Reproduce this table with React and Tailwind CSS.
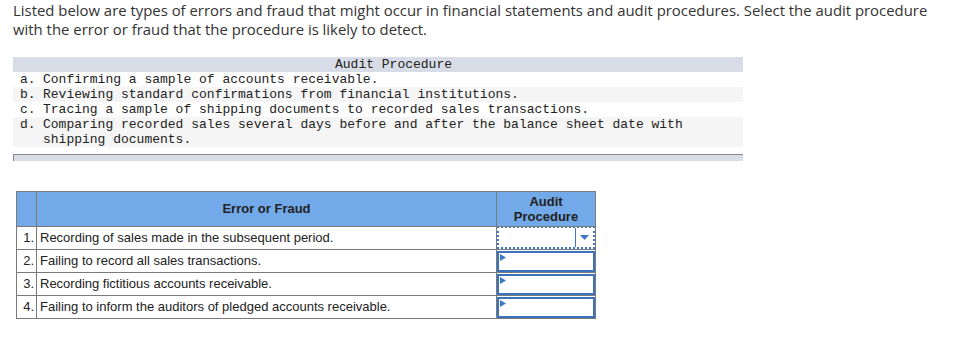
import React from 'react';

const procedures = [
  { key: 'a', text: 'Confirming a sample of accounts receivable.' },
  { key: 'b', text: 'Reviewing standard confirmations from financial institutions.' },
  { key: 'c', text: 'Tracing a sample of shipping documents to recorded sales transactions.' },
  {
    key: 'd',
    text: 'Comparing recorded sales several days before and after the balance sheet date with',
    more: 'shipping documents.',
  },
];

const errors = [
  'Recording of sales made in the subsequent period.',
  'Failing to record all sales transactions.',
  'Recording fictitious accounts receivable.',
  'Failing to inform the auditors of pledged accounts receivable.',
];

const Flag = () => (
  <svg className="absolute left-[1px] top-[1px]" width="6" height="7" viewBox="0 0 6 7">
    <path d="M0 0 L6 3.5 L0 7 Z" fill="#3b78c9" />
  </svg>
);

const App = () => {
  return (
    <div className="w-[971px] h-[342px] bg-white px-[13px] pt-[1px] font-['Liberation_Sans',Arial,sans-serif]">
      {/* Instructions */}
      <p className="text-[14.9px] leading-[19px] text-[#333] font-['Open_Sans',sans-serif] whitespace-nowrap">
        Listed below are types of errors and fraud that might occur in financial statements and audit procedures. Select the audit procedure
        <br />
        with the error or fraud that the procedure is likely to detect.
      </p>

      {/* Audit procedure list */}
      <div className="mt-[18px] w-[730px] font-['Liberation_Mono','Courier_New',monospace] text-[13px] leading-[15px] text-[#222]">
        <div className="h-[15px] bg-[#d7dce6] pl-[322px]">Audit Procedure</div>
        {procedures.map((p, i) => (
          <div key={p.key} className={`pl-[7px] ${i % 2 === 1 ? 'bg-[#f5f5f5]' : 'bg-white'}`}>
            <div className="flex">
              <span className="w-[23px] shrink-0">{p.key}.</span>
              <span>{p.text}</span>
            </div>
            {p.more && <div className="pl-[23px]">{p.more}</div>}
          </div>
        ))}
        <div className="mt-[7px] h-[7px] border-t border-l border-[#8a8a8a] bg-[#d7dce6]" />
      </div>

      {/* Matching table */}
      <table className="mt-[30px] ml-[3px] border-collapse text-[13px] text-[#222]">
        <thead>
          <tr className="h-[35px] bg-[#72a9e8]">
            <th className="w-[20px] border border-[#7a7a7a]" />
            <th className="w-[460px] border border-[#7a7a7a] font-bold text-center">Error or Fraud</th>
            <th className="w-[99px] border border-[#7a7a7a] font-bold text-center leading-[15px]">
              Audit
              <br />
              Procedure
            </th>
          </tr>
        </thead>
        <tbody>
          {errors.map((e, i) => (
            <tr key={i} className={i === 0 ? 'h-[22px]' : 'h-[23px]'}>
              <td className="border border-[#7a7a7a] text-right pr-[2px]">{i + 1}.</td>
              <td className="border border-[#7a7a7a] pl-[3px]">{e}</td>
              <td className="border border-[#7a7a7a] p-0 align-top">
                {i === 0 ? (
                  <div className="flex h-[23px] -mt-[1px] border-2 border-dotted border-[#3b78c9] bg-white">
                    <div className="flex-1" />
                    <div className="w-[18px] border-l border-[#3b78c9] flex items-center justify-center">
                      <svg width="9" height="5" viewBox="0 0 9 5">
                        <path d="M0 0 H9 L4.5 5 Z" fill="#3b78c9" />
                      </svg>
                    </div>
                  </div>
                ) : (
                  <div className="relative h-[21px] mt-[1px] border-2 border-[#3a72bd] bg-white">
                    <Flag />
                  </div>
                )}
              </td>
            </tr>
          ))}
        </tbody>
      </table>
    </div>
  );
};

export default App;
